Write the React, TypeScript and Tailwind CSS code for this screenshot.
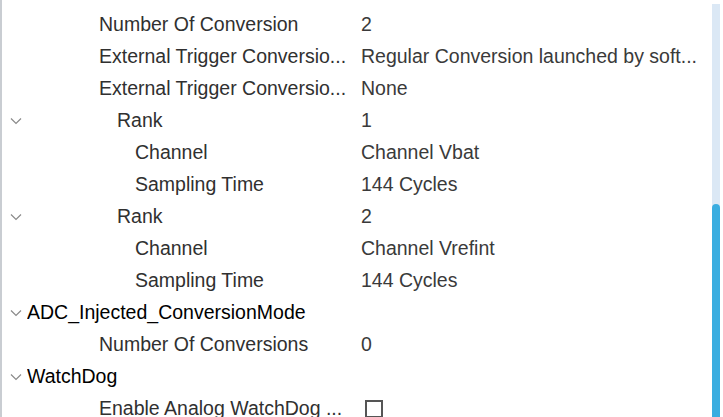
import type { ReactNode } from "react";

type Row = {
  label: string;
  value?: string;
  depth: 0 | 1 | 2 | 3;
  expandable?: boolean;
  checkbox?: boolean;
};

const ROWS: Row[] = [
  { label: "Number Of Conversion", value: "2", depth: 1 },
  { label: "External Trigger Conversio...", value: "Regular Conversion launched by soft...", depth: 1 },
  { label: "External Trigger Conversio...", value: "None", depth: 1 },
  { label: "Rank", value: "1", depth: 2, expandable: true },
  { label: "Channel", value: "Channel Vbat", depth: 3 },
  { label: "Sampling Time", value: "144 Cycles", depth: 3 },
  { label: "Rank", value: "2", depth: 2, expandable: true },
  { label: "Channel", value: "Channel Vrefint", depth: 3 },
  { label: "Sampling Time", value: "144 Cycles", depth: 3 },
  { label: "ADC_Injected_ConversionMode", depth: 0, expandable: true },
  { label: "Number Of Conversions", value: "0", depth: 1 },
  { label: "WatchDog", depth: 0, expandable: true },
  { label: "Enable Analog WatchDog ...", depth: 1, checkbox: true },
];

const INDENT: Record<Row["depth"], string> = {
  0: "pl-0",
  1: "pl-[72px]",
  2: "pl-[90px]",
  3: "pl-[108px]",
};

function Chevron() {
  return (
    <svg width="12" height="8" viewBox="0 0 12 8" className="text-[#8a8a8a]">
      <path d="M1 1.5 L6 6.5 L11 1.5" fill="none" stroke="currentColor" strokeWidth="1.2" />
    </svg>
  );
}

function TreeRow({ row }: { row: Row }): ReactNode {
  return (
    <div className="flex h-8 items-center whitespace-nowrap">
      <div className="flex w-[25px] shrink-0 items-center justify-center pl-[2px]">
        {row.expandable && <Chevron />}
      </div>
      <div
        className={`w-[323px] shrink-0 overflow-hidden ${INDENT[row.depth]} ${
          row.depth === 0 ? "text-black" : "text-[#303030]"
        }`}
      >
        {row.label}
      </div>
      <div className="ml-[11px] w-[342px] overflow-hidden text-[#3a3a3a]">
        {row.checkbox ? (
          <div className="ml-[4px] h-[18px] w-[18px] border-2 border-[#555]" />
        ) : (
          row.value
        )}
      </div>
    </div>
  );
}

export default function App() {
  return (
    <div className="relative flex h-[417px] w-[723px] overflow-hidden bg-white font-['Liberation_Sans',Arial,sans-serif] text-[19.5px]">
      <div className="w-[2px] shrink-0 bg-[#c9cdd2]" />
      <div className="flex-1 pt-[9px]">
        {ROWS.map((r, i) => (
          <TreeRow key={i} row={r} />
        ))}
      </div>

      {/* scrollbar */}
      <div className="absolute bottom-0 right-[3px] top-[4px] flex w-[8px] flex-col bg-[#dbe8f5]">
        <div className="mt-[200px] flex-1 rounded-t-[4px] bg-[#3aade0]" />
      </div>
    </div>
  );
}
